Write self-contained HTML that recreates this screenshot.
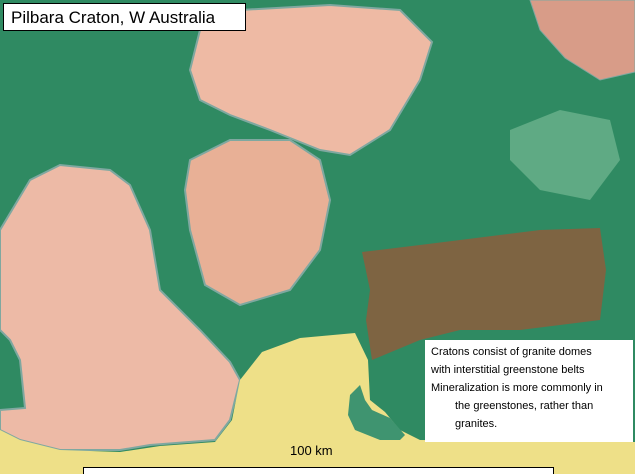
<!DOCTYPE html>
<html><head><style>
body{margin:0;width:635px;height:474px;overflow:hidden;font-family:"Liberation Sans",sans-serif;}
.t{position:absolute;left:3px;top:3px;width:243px;height:28px;background:#fff;border:1px solid #000;box-sizing:border-box;font-size:17px;line-height:27px;padding-left:7px;}
.b{position:absolute;left:425px;top:340px;width:208px;height:102px;background:#fff;font-size:11px;line-height:18px;padding:3px 0 0 6px;box-sizing:border-box;}
</style></head><body>
<svg width="635" height="474" style="position:absolute;left:0;top:0">
<rect width="635" height="474" fill="#2f8a62"/>
<polygon points="510,130 560,110 610,120 620,160 590,200 540,190 510,160" fill="#5faa84"/>
<polygon points="530,0 635,0 635,72 600,80 565,58 540,30" fill="#d89c88" stroke="#7fa8a0"/>
<polygon points="200,30 240,10 330,5 400,10 432,42 420,80 390,130 350,155 320,150 270,130 230,115 200,100 190,70" fill="#eebaa4" stroke="#7fa8a0" stroke-width="2"/>
<polygon points="190,160 230,140 290,140 320,160 330,200 320,250 290,290 240,305 205,285 190,230 185,190" fill="#e8b096" stroke="#7fa8a0" stroke-width="2"/>
<polygon points="362,252 420,245 540,230 600,228 606,270 600,320 520,330 460,330 420,340 372,360 366,320 370,290" fill="#7e6442"/>
<polygon points="0,230 30,180 60,165 110,170 130,185 150,230 160,290 200,330 230,362 240,380 230,420 215,440 150,445 120,450 60,450 20,440 0,430 0,410 25,408 20,360 10,340 0,330" fill="#edbaa6" stroke="#7fa8a0" stroke-width="2"/>
<polygon points="0,430 20,440 60,450 120,452 160,446 215,442 232,420 240,380 262,352 300,338 355,333 368,360 370,400 385,412 400,430 420,440 635,442 635,474 0,474" fill="#eee088"/>
<polygon points="350,395 360,385 365,400 372,410 390,418 405,435 400,440 380,440 355,430 348,415" fill="#3f9470"/>
<text x="290" y="455" font-family="Liberation Sans" font-size="13" fill="#000">100 km</text>
<rect x="83.5" y="467.5" width="470" height="10" fill="#fff" stroke="#000"/>
</svg>
<div class="t">Pilbara Craton, W Australia</div>
<div class="b">Cratons consist of granite domes<br>with interstitial greenstone belts<br>Mineralization is more commonly in<br><span style="padding-left:24px">the greenstones, rather than</span><br><span style="padding-left:24px;line-height:12px">granites.</span></div>
</body></html>
